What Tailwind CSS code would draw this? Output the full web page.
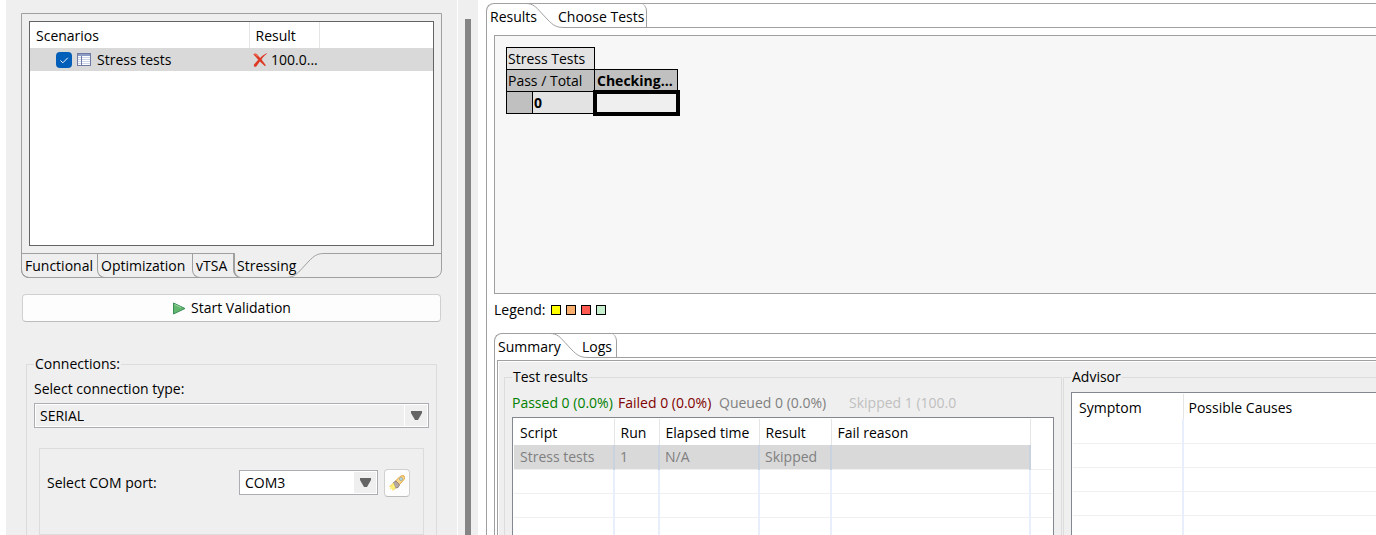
<!DOCTYPE html>
<html lang="en">
<head>
    <meta charset="UTF-8">
    <meta name="viewport" content="width=device-width, initial-scale=1.0">
    <title>Stress tests</title>
    <script src="https://cdn.jsdelivr.net/npm/@tailwindcss/browser@4"></script>
</head>
<body class="h-screen overflow-hidden bg-white font-['Open_Sans','Noto_Sans',sans-serif] text-[14px] leading-5 text-black">
    <div class="flex h-full">
        <!-- Left side -->
        <aside class="flex w-[452px] shrink-0 flex-col ml-[6px] border-r border-white bg-[#efefef] pt-[13px] pl-[15px] pr-[15px]">
            <!-- Scenarios -->
            <section class="rounded-b-lg border border-[#a0a0a0]">
                <div class="p-[7px]">
                    <div class="h-[225px] border border-[#646464] bg-white">
                        <table class="w-full table-fixed border-collapse text-left">
                            <colgroup>
                                <col class="w-[219px]">
                                <col class="w-[70px]">
                                <col>
                            </colgroup>
                            <thead>
                                <tr class="h-[26px]">
                                    <th class="border-r border-[#e5e5e5] pt-px pl-[6px] font-normal">Scenarios</th>
                                    <th class="border-r border-[#e5e5e5] pt-px pl-[6px] font-normal">Result</th>
                                    <th></th>
                                </tr>
                            </thead>
                            <tbody>
                                <tr class="h-[23px] bg-[#d9d9d9]">
                                    <td>
                                        <div class="flex items-center pl-[26px]">
                                            <span class="grid size-4 place-items-center">
                                                <input id="stress" type="checkbox" checked class="col-start-1 row-start-1 size-4 appearance-none rounded bg-[#005fb8]">
                                                <svg class="pointer-events-none col-start-1 row-start-1 size-4" viewBox="0 0 16 16" fill="none" stroke="white"><path d="M4.500 8.500l2.300 2.300 5-5" /></svg>
                                            </span>
                                            <svg class="ml-[5px] h-[14px] w-[14px]" viewBox="0 0 14 14">
                                                <rect x=".5" y=".5" width="13" height="12" fill="#fff" stroke="#6d7ba6" />
                                                <path d="M1 2h12" stroke="#8d9cc5" stroke-width="2" />
                                                <path d="M1 4.500h12M1 6.500h12M1 8.500h12M1 10.500h12" stroke="#ccd4e8" />
                                                <path d="M4.500 3v9" stroke="#6d7ba6" />
                                            </svg>
                                            <label for="stress" class="ml-[6px]">Stress tests</label>
                                        </div>
                                    </td>
                                    <td>
                                        <div class="flex items-center pl-1">
                                            <svg class="mr-1 h-[14px] w-[14px]" viewBox="0 0 14 14">
                                                <path d="M.3 1.200C2 .2 3.300 .5 4.300 1.600L7.200 5C9 3 11 1.500 13.800.3L14 .8C11.500 2.500 9.900 4.300 8.600 6.500L13 12.600 11.700 12.900 6.900 8.400C5.700 10 4.500 11.700 3.300 13.600 1.800 14.100 .6 13.500 .8 12.100 2 10.200 3.500 8.400 5.200 6.700Z" fill="#dd3b25" />
                                                <path d="M.8 1.300C2 .8 2.800 1 3.500 1.900L5 3.600" fill="none" stroke="#f4917f" />
                                            </svg>
                                            <span>100.0...</span>
                                        </div>
                                    </td>
                                    <td></td>
                                </tr>
                            </tbody>
                        </table>
                    </div>
                </div>
                <div class="flex h-[24px]">
                    <button class="-mb-px -ml-px w-[76px] rounded-bl-lg border border-r-0 border-[#a0a0a0] pl-[3px] text-left">Functional</button>
                    <button class="-mb-px w-[95px] rounded-bl-lg border border-r-0 border-[#a0a0a0] pl-[3px] text-left">Optimization</button>
                    <button class="-mb-px w-[41px] rounded-bl-lg border border-r-0 border-[#a0a0a0] pl-[3px] text-left">vTSA</button>
                    <button class="-mb-px w-[54px] rounded-bl-lg border-b border-l-2 border-[#a0a0a0] pt-px pl-[2px] text-left whitespace-nowrap">Stressing</button>
                    <svg class="-mb-px h-[25px] w-[37px] shrink-0" viewBox="0 0 37 25" fill="none" stroke="#a0a0a0"><path d="M0 24.500C7 24 10 21 15 15.500L22 8C27 3 30 .5 37 .5" /></svg>
                    <div class="flex-1 border-t border-[#a0a0a0]"></div>
                </div>
            </section>

            <button class="mt-4 mx-px flex h-7 items-center justify-center gap-[5px] rounded border border-[#d0d0d0] border-b-[#bcbcbc] bg-[#fdfdfd]">
                <svg class="h-[13px] w-[14px]" viewBox="0 0 14 13">
                    <path d="M1.500 1L13 6.500 1.500 12Z" fill="#62b66d" stroke="#3a8c58" />
                    <path d="M2.500 2.500L9 5.500" stroke="#9ad79c" />
                </svg>
                Start Validation
            </button>

            <!-- Connections -->
            <fieldset class="mt-8 mx-[5px] min-h-0 flex-1 border border-b-0 border-[#dcdcdc] px-[7px]">
                <legend class="px-px">Connections:</legend>
                <label for="type" class="block pt-[5px]">Select connection type:</label>
                <div class="mt-1 grid border border-[#abadb3]">
                    <select id="type" class="col-start-1 row-start-1 h-[23px] appearance-none border border-white bg-[#efefef] pl-1">
                        <option>SERIAL</option>
                    </select>
                    <span class="pointer-events-none col-start-1 row-start-1 flex w-6 items-center justify-center self-stretch justify-self-end border border-white">
                        <svg class="h-[9px] w-[11px]" viewBox="0 0 11 9"><path d="M0 0h11v2L7 9H4L0 2z" fill="#646464" /></svg>
                    </span>
                </div>
                <div class="mt-5 ml-[5px] mr-[5px] flex h-[87px] items-start border border-[#dcdcdc] pt-5 pl-[7px] pr-[13px]">
                    <label for="port" class="flex-1 pt-1">Select COM port:</label>
                    <div class="mt-px grid w-[139px] border border-[#abadb3]">
                        <select id="port" class="col-start-1 row-start-1 h-[23px] appearance-none bg-white pl-[5px]">
                            <option>COM3</option>
                        </select>
                        <span class="pointer-events-none col-start-1 row-start-1 flex w-6 items-center justify-center self-stretch justify-self-end border border-white bg-[#efefef]">
                            <svg class="h-[9px] w-[11px]" viewBox="0 0 11 9"><path d="M0 0h11v2L7 9H4L0 2z" fill="#646464" /></svg>
                        </span>
                    </div>
                    <button aria-label="Detect port" class="ml-[6px] flex h-7 w-[26px] items-center justify-center rounded border border-[#d0d0d0] border-b-[#bcbcbc] bg-[#fdfdfd]">
                        <svg class="size-4" viewBox="0 0 16 16">
                            <path d="M6.500 6L11 1.500Q13 .3 15 .8 16 2.500 15 4.500L10.500 9.500Z" fill="#f8d58a" stroke="#e3a73f" />
                            <path d="M4.500 7.500L7 6l3.500 4-1.500 2.500-3 .5z" fill="#b7a9a4" stroke="#8f8380" />
                            <circle cx="12" cy="4" r="1.500" fill="#bfe0ef" stroke="#7c98a3" stroke-width=".6" />
                            <path d="M4.500 8L.5 12l1 .3L.8 14.800 3 13.500 3 15.500 6.500 13z" fill="#ffef7a" />
                            <path d="M4.500 8L.5 12M6.500 13L4 15.500" stroke="#f5cd4c" />
                        </svg>
                    </button>
                </div>
            </fieldset>
        </aside>

        <!-- Scroll bar -->
        <div class="w-5 shrink-0 bg-[#efefef] pt-[19px] pl-[7px]">
            <div class="h-full w-[6px] bg-[#858585]"></div>
        </div>

        <!-- Right side -->
        <main class="min-w-0 flex-1 pt-[3px] pl-2">
            <div class="flex h-full flex-col rounded-tl-lg border-t border-l border-[#a0a0a0]">
                <div class="flex h-6 shrink-0">
                    <button class="w-[39px] pl-[3px] pt-px text-left whitespace-nowrap">Results</button>
                    <svg class="-mt-px h-[25px] w-[38px] shrink-0" viewBox="0 0 38 25" fill="none" stroke="#a0a0a0"><path d="M0 .5C7 .5 10 4 15 9.500L22 17C27 22 30 24.500 38 24.500" /></svg>
                    <div class="-mt-px -ml-[7px] w-[90px] rounded-tr-lg border-r border-[#a0a0a0]">
                        <button class="h-full pt-[2px] pl-[1px] text-left whitespace-nowrap">Choose Tests</button>
                    </div>
                    <div class="flex-1 border-b border-[#a0a0a0]"></div>
                </div>

                <div class="-mt-px ml-[76px] w-[84px] shrink-0 border-t border-[#a0a0a0]"></div>
                <div class="flex min-h-0 flex-1 flex-col pt-[7px] pl-[7px]">
                    <div class="h-[259px] shrink-0 border border-r-0 border-[#a0a0a0] bg-[#f7f7f7] pt-[11px] pl-[11px]">
                        <table class="table-fixed border-collapse">
                            <colgroup>
                                <col class="w-[26px]">
                                <col class="w-[62px]">
                                <col class="w-[83px]">
                            </colgroup>
                            <tbody>
                                <tr class="h-[22px]">
                                    <td colspan="2" class="border border-black bg-[#e3e3e3] pl-[1px]">Stress Tests</td>
                                    <td></td>
                                </tr>
                                <tr class="h-[22px]">
                                    <td colspan="2" class="border border-black bg-[#c0c0c0] pl-[1px]">Pass / Total</td>
                                    <th class="border border-black bg-[#c0c0c0] pl-[2px] text-left font-bold">Checking...</th>
                                </tr>
                                <tr class="h-[22px]">
                                    <td class="border border-black bg-[#c0c0c0]"></td>
                                    <td class="border border-black bg-[#e3e3e3] pl-[1px] font-bold">0</td>
                                    <td class="border border-black bg-[#efefef] outline-4 -outline-offset-2 outline-black"></td>
                                </tr>
                            </tbody>
                        </table>
                    </div>

                    <div class="flex h-[39px] shrink-0 items-center gap-[5px] pb-[7px]">
                        <span class="w-[52px]">Legend:</span>
                        <span class="size-[10px] border border-black bg-[#ffff00]"></span>
                        <span class="size-[10px] border border-black bg-[#f9ae6e]"></span>
                        <span class="size-[10px] border border-black bg-[#ff5a4f]"></span>
                        <span class="size-[10px] border border-black bg-[#c6efce]"></span>
                    </div>

                    <!-- Summary / Logs -->
                    <div class="flex min-h-0 flex-1 flex-col rounded-tl-lg border-t border-l border-[#a0a0a0]">
                        <div class="flex h-6 shrink-0">
                            <button class="w-[55px] pl-[3px] pt-px text-left whitespace-nowrap">Summary</button>
                            <svg class="-mt-px h-[25px] w-[38px] shrink-0" viewBox="0 0 38 25" fill="none" stroke="#a0a0a0"><path d="M0 .5C7 .5 10 4 15 9.500L22 17C27 22 30 24.500 38 24.500" /></svg>
                            <div class="-mt-px -ml-[7px] w-[36px] rounded-tr-lg border-r border-[#a0a0a0]">
                                <button class="h-full pt-[2px] pl-[1px] text-left">Logs</button>
                            </div>
                            <div class="flex-1 border-b border-[#a0a0a0]"></div>
                        </div>
                        <div class="-mt-px ml-[92px] w-[30px] shrink-0 border-t border-[#a0a0a0]"></div>
                        <div class="mt-[2px] ml-[2px] flex min-h-0 flex-1 border-t border-l border-[#a0a0a0]">
                            <div class="flex min-w-0 flex-1 gap-px border-t border-l border-white bg-[#efefef] pt-[5px] pl-[5px]">
                                <fieldset class="flex w-[558px] shrink-0 flex-col border border-b-0 border-[#dcdcdc] px-[7px]">
                                    <legend class="px-px">Test results</legend>
                                    <div class="grid h-[30px] shrink-0 grid-cols-[106px_101px_130px_1fr] items-center whitespace-nowrap pt-[2px]">
                                        <span class="text-[#008000]">Passed 0 (0.0%)</span>
                                        <span class="text-[#800000]">Failed 0 (0.0%)</span>
                                        <span class="text-[#808080]">Queued 0 (0.0%)</span>
                                        <span class="text-[#c0c0c0]">Skipped 1 (100.0</span>
                                    </div>
                                    <div class="min-h-0 flex-1 overflow-hidden border border-b-0 border-[#828790] bg-white p-px pb-0">
                                        <table class="w-full table-fixed border-collapse text-left">
                                            <colgroup>
                                                <col class="w-[100px]">
                                                <col class="w-[45px]">
                                                <col class="w-[100px]">
                                                <col class="w-[72px]">
                                                <col class="w-[199px]">
                                                <col>
                                            </colgroup>
                                            <thead>
                                                <tr class="h-[26px]">
                                                    <th class="border-r border-[#e5e5e5] pt-px pl-[6px] font-normal">Script</th>
                                                    <th class="border-r border-[#e5e5e5] pt-px pl-[6px] font-normal">Run</th>
                                                    <th class="border-r border-[#e5e5e5] pt-px pl-[6px] font-normal">Elapsed time</th>
                                                    <th class="border-r border-[#e5e5e5] pt-px pl-[6px] font-normal">Result</th>
                                                    <th class="border-r border-[#e5e5e5] pt-px pl-[6px] font-normal">Fail reason</th>
                                                    <th></th>
                                                </tr>
                                            </thead>
                                            <tbody>
                                                <tr class="h-6 border-b border-[#efefef] text-[#808080]">
                                                    <td class="border-r-2 border-r-[#c9d3e0] bg-[#d9d9d9] pl-[6px]">Stress tests</td>
                                                    <td class="border-r-2 border-r-[#c9d3e0] bg-[#d9d9d9] pl-[5px]">1</td>
                                                    <td class="border-r-2 border-r-[#c9d3e0] bg-[#d9d9d9] pl-[5px]">N/A</td>
                                                    <td class="border-r-2 border-r-[#c9d3e0] bg-[#d9d9d9] pl-[5px]">Skipped</td>
                                                    <td class="border-r-2 border-r-[#c9d3e0] bg-[#d9d9d9]"></td>
                                                    <td></td>
                                                </tr>
                                                <tr class="h-6 border-b border-[#efefef]">
                                                    <td class="border-r-2 border-r-[#e8effb]"></td>
                                                    <td class="border-r-2 border-r-[#e8effb]"></td>
                                                    <td class="border-r-2 border-r-[#e8effb]"></td>
                                                    <td class="border-r-2 border-r-[#e8effb]"></td>
                                                    <td class="border-r-2 border-r-[#e8effb]"></td>
                                                    <td></td>
                                                </tr>
                                                <tr class="h-6 border-b border-[#efefef]">
                                                    <td class="border-r-2 border-r-[#e8effb]"></td>
                                                    <td class="border-r-2 border-r-[#e8effb]"></td>
                                                    <td class="border-r-2 border-r-[#e8effb]"></td>
                                                    <td class="border-r-2 border-r-[#e8effb]"></td>
                                                    <td class="border-r-2 border-r-[#e8effb]"></td>
                                                    <td></td>
                                                </tr>
                                                <tr class="h-6">
                                                    <td class="border-r-2 border-r-[#e8effb]"></td>
                                                    <td class="border-r-2 border-r-[#e8effb]"></td>
                                                    <td class="border-r-2 border-r-[#e8effb]"></td>
                                                    <td class="border-r-2 border-r-[#e8effb]"></td>
                                                    <td class="border-r-2 border-r-[#e8effb]"></td>
                                                    <td></td>
                                                </tr>
                                            </tbody>
                                        </table>
                                    </div>
                                </fieldset>

                                <fieldset class="flex min-w-0 flex-1 flex-col border border-r-0 border-b-0 border-[#dcdcdc] pl-[7px]">
                                    <legend class="px-px">Advisor</legend>
                                    <div class="mt-[5px] min-h-0 flex-1 overflow-hidden border border-r-0 border-b-0 border-[#828790] bg-white pt-px pl-px">
                                        <table class="w-full table-fixed border-collapse text-left">
                                            <colgroup>
                                                <col class="w-[110px]">
                                                <col>
                                            </colgroup>
                                            <thead>
                                                <tr class="h-[25px]">
                                                    <th class="border-r border-[#e5e5e5] pt-[2px] pl-[6px] font-normal">Symptom</th>
                                                    <th class="pt-[2px] pl-[5px] font-normal">Possible Causes</th>
                                                </tr>
                                            </thead>
                                            <tbody>
                                                <tr class="h-6 border-b border-[#efefef]"><td class="border-r-2 border-r-[#e8effb]"></td><td></td></tr>
                                                <tr class="h-6 border-b border-[#efefef]"><td class="border-r-2 border-r-[#e8effb]"></td><td></td></tr>
                                                <tr class="h-6 border-b border-[#efefef]"><td class="border-r-2 border-r-[#e8effb]"></td><td></td></tr>
                                                <tr class="h-6 border-b border-[#efefef]"><td class="border-r-2 border-r-[#e8effb]"></td><td></td></tr>
                                                <tr class="h-6"><td class="border-r-2 border-r-[#e8effb]"></td><td></td></tr>
                                            </tbody>
                                        </table>
                                    </div>
                                </fieldset>
                            </div>
                        </div>
                    </div>
                </div>
            </div>
        </main>
    </div>
</body>
</html>
